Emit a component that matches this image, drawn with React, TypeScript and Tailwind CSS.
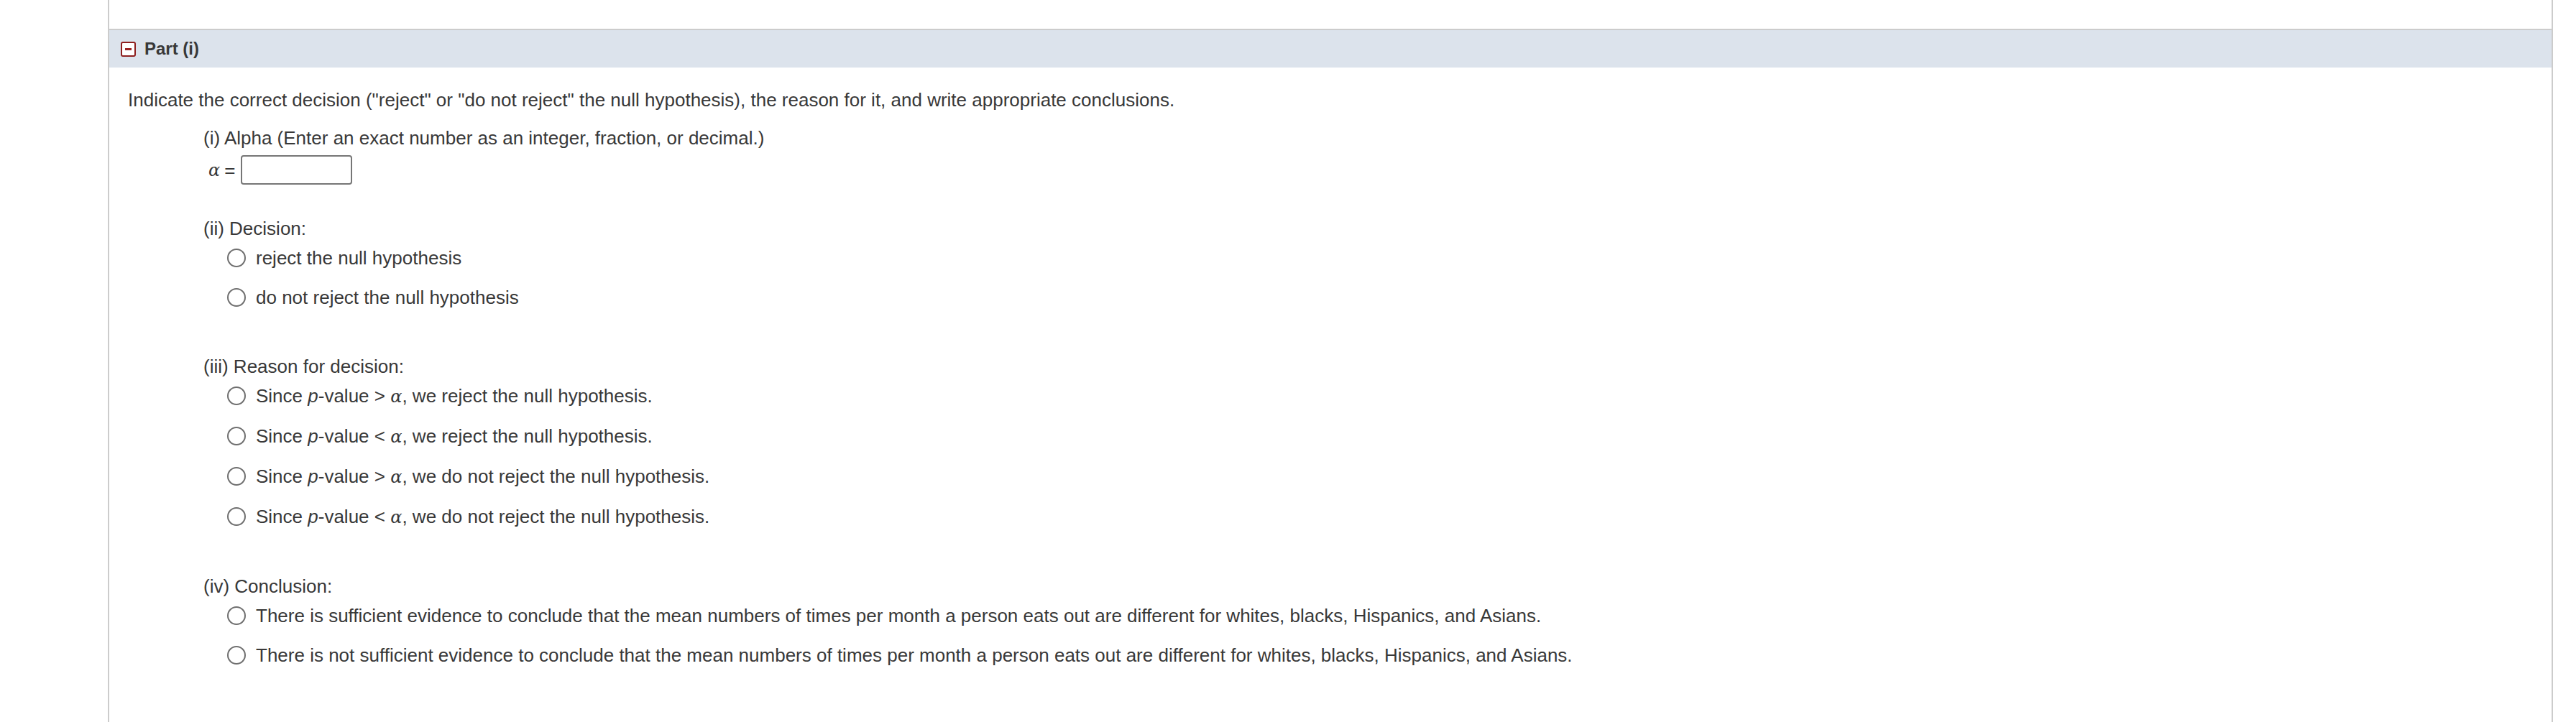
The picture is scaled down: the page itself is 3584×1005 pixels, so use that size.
import React from 'react'

const font = { fontFamily: '"Liberation Sans", Arial, sans-serif' }

function Alpha() {
  return <span className="font-['DejaVu_Serif',serif] text-[24px] italic">α</span>
}

function Radio({ children }: { children: React.ReactNode }) {
  return (
    <label className="flex h-[32px] items-center gap-[14px]">
      <span className="block h-[26px] w-[26px] shrink-0 rounded-full border-2 border-[#6f6f6f] bg-white" />
      <span>{children}</span>
    </label>
  )
}

function PValue({ op, action }: { op: string; action: string }) {
  return (
    <Radio>
      Since <i>p</i>-value {op} <Alpha />, we {action} the null hypothesis.
    </Radio>
  )
}

export default function App() {
  return (
    <div className="min-h-[1005px] w-full bg-white text-[26px] leading-[32px] text-[#383838]" style={font}>
      <div className="ml-[150px] mr-[32px] min-h-[1005px] border-x-2 border-[#cccccc]">
        <div className="h-[40px]" />
        <div className="flex h-[54px] items-center gap-[12px] border-t-2 border-[#cccccc] bg-[#dce3ec] pl-[16px] text-[24px]">
          <span className="flex h-[21px] w-[21px] items-center justify-center rounded-[3px] border-2 border-[#8e1f1f] bg-white">
            <span className="block h-[3px] w-[9px] bg-[#9b2222]" />
          </span>
          <span className="font-bold">Part (i)</span>
        </div>

        <div className="pl-[26px] pt-[29px]">
          <p>Indicate the correct decision ("reject" or "do not reject" the null hypothesis), the reason for it, and write appropriate conclusions.</p>

          <div className="ml-[105px]">
            <p className="mt-[21px]">(i) Alpha (Enter an exact number as an integer, fraction, or decimal.)</p>
            <div className="mt-[8px] flex items-center pl-[7px]">
              <Alpha />
              <span className="ml-[6px]">=</span>
              <span className="ml-[8px] block h-[41px] w-[155px] rounded-[4px] border-2 border-[#767676] bg-white" />
            </div>

            <p className="mt-[45px]">(ii) Decision:</p>
            <div className="mt-[9px] flex flex-col gap-[23px] pl-[33px]">
              <Radio>reject the null hypothesis</Radio>
              <Radio>do not reject the null hypothesis</Radio>
            </div>

            <p className="mt-[64px]">(iii) Reason for decision:</p>
            <div className="mt-[9px] flex flex-col gap-[24px] pl-[33px]">
              <PValue op=">" action="reject" />
              <PValue op="<" action="reject" />
              <PValue op=">" action="do not reject" />
              <PValue op="<" action="do not reject" />
            </div>

            <p className="mt-[65px]">(iv) Conclusion:</p>
            <div className="mt-[9px] flex flex-col gap-[23px] pl-[33px]">
              <Radio>There is sufficient evidence to conclude that the mean numbers of times per month a person eats out are different for whites, blacks, Hispanics, and Asians.</Radio>
              <Radio>There is not sufficient evidence to conclude that the mean numbers of times per month a person eats out are different for whites, blacks, Hispanics, and Asians.</Radio>
            </div>
          </div>
        </div>
      </div>
    </div>
  )
}
